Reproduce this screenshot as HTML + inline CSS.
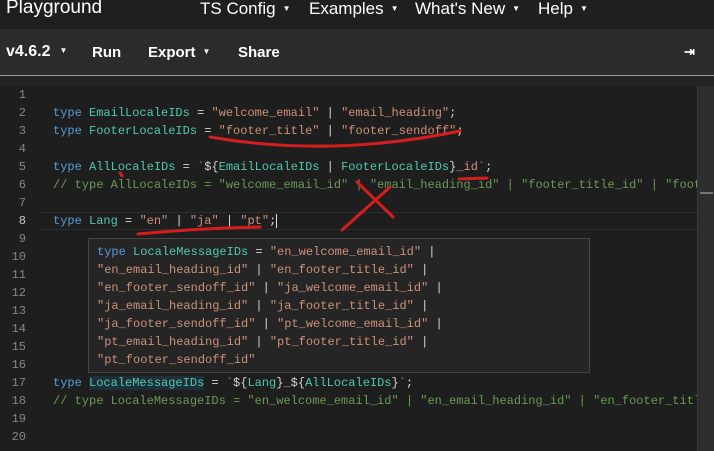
<!DOCTYPE html>
<html><head><meta charset="utf-8"><style>
*{margin:0;padding:0;box-sizing:border-box}
body{width:714px;height:451px;overflow:hidden;background:#1e1e1e;font-family:"Liberation Sans",sans-serif;position:relative}
.top{position:absolute;left:0;top:0;width:714px;height:29px;background:#1f1f1f;color:#fff}
.top>span{position:absolute;top:-1px;font-size:17px;white-space:nowrap}
.bar{position:absolute;left:0;top:29px;width:714px;height:46px;background:#2b2b2b;color:#fff;font-weight:bold}
.bar>span{position:absolute;top:15px;font-size:15px;white-space:nowrap}
.sep{position:absolute;left:0;top:75px;width:714px;height:1px;background:#9a9a9a}
.strip{position:absolute;left:0;top:76px;width:714px;height:10px;background:#232323}
.car{font-size:8px;vertical-align:3px;margin-left:7px;font-weight:normal}
.code{position:absolute;left:0;top:86px;width:697px;height:365px;overflow:hidden;font-family:"Liberation Mono",monospace;font-size:12px;line-height:18px;white-space:pre;color:#d4d4d4}
.ln{position:absolute;left:0;width:26px;text-align:right;color:#858585;font-size:12px}
.l{position:absolute;left:53px}
.k{color:#569cd6}.t{color:#4ec9b0}.s{color:#ce9178}.c{color:#6a9955}
.cur{position:absolute;left:40px;top:212px;width:657px;height:18px;border-top:1px solid #2c2c2c;border-bottom:1px solid #2c2c2c}
.tip{position:absolute;left:88px;top:238px;width:502px;height:135px;background:#252526;border:1px solid #454545;font-family:"Liberation Mono",monospace;font-size:12px;line-height:18px;white-space:pre;color:#d4d4d4;padding:4px 0 0 8px}
.sb{position:absolute;left:697px;top:86px;width:17px;height:365px;background:#2e2e2e;border-left:1px solid #3a3a3a}
</style></head><body>
<div class="top"><span style="left:6px;font-size:19px;top:-3px">Playground</span><span style="left:200px">TS Config<span class="car">▼</span></span><span style="left:309px">Examples<span class="car">▼</span></span><span style="left:415px">What's New<span class="car">▼</span></span><span style="left:538px">Help<span class="car">▼</span></span></div>
<div class="bar"><span style="left:6px;font-size:16px;top:14px">v4.6.2<span class="car" style="margin-left:9px">▼</span></span><span style="left:92px">Run</span><span style="left:148px">Export<span class="car">▼</span></span><span style="left:238px">Share</span><span style="left:684px;font-size:13px">⇥</span></div>
<div class="sep"></div><div class="strip"></div>
<div class="cur"></div>
<div class="sb"><div style="position:absolute;left:2px;top:106px;width:13px;height:2px;background:#777"></div></div>
<div class="code">
<div class="ln" style="top:0">1</div>
<div class="ln" style="top:18px">2</div><div class="l" style="top:18px"><span class="k">type</span> <span class="t">EmailLocaleIDs</span> = <span class="s">"welcome_email"</span> | <span class="s">"email_heading"</span>;</div>
<div class="ln" style="top:36px">3</div><div class="l" style="top:36px"><span class="k">type</span> <span class="t">FooterLocaleIDs</span> = <span class="s">"footer_title"</span> | <span class="s">"footer_sendoff"</span>;</div>
<div class="ln" style="top:54px">4</div>
<div class="ln" style="top:72px">5</div><div class="l" style="top:72px"><span class="k">type</span> <span class="t">AllLocaleIDs</span> = <span class="s">`</span>${<span class="t">EmailLocaleIDs</span> | <span class="t">FooterLocaleIDs</span>}<span class="s">_id`</span>;</div>
<div class="ln" style="top:90px">6</div><div class="l c" style="top:90px">// type AllLocaleIDs = "welcome_email_id" | "email_heading_id" | "footer_title_id" | "footer_sendoff_id"</div>
<div class="ln" style="top:108px">7</div>
<div class="ln" style="top:126px;color:#c6c6c6">8</div><div class="l" style="top:126px"><span class="k">type</span> <span class="t">Lang</span> = <span class="s">"en"</span> | <span class="s">"ja"</span> | <span class="s">"pt"</span>;<span style="border-left:1px solid #ddd"></span></div>
<div class="ln" style="top:144px">9</div>
<div class="ln" style="top:162px">10</div>
<div class="ln" style="top:180px">11</div>
<div class="ln" style="top:198px">12</div>
<div class="ln" style="top:216px">13</div>
<div class="ln" style="top:234px">14</div>
<div class="ln" style="top:252px">15</div>
<div class="ln" style="top:270px">16</div>
<div class="ln" style="top:288px">17</div><div class="l" style="top:288px"><span class="k">type</span> <span class="t" style="background:#1f2f3a">LocaleMessageIDs</span> = <span class="s">`</span>${<span class="t">Lang</span>}<span class="s">_</span>${<span class="t">AllLocaleIDs</span>}<span class="s">`</span>;</div>
<div class="ln" style="top:306px">18</div><div class="l c" style="top:306px">// type LocaleMessageIDs = "en_welcome_email_id" | "en_email_heading_id" | "en_footer_title_id"</div>
<div class="ln" style="top:324px">19</div>
<div class="ln" style="top:342px">20</div>
</div>
<div class="tip"><span class="k">type</span> <span class="t">LocaleMessageIDs</span> = <span class="s">"en_welcome_email_id"</span> |
<span class="s">"en_email_heading_id"</span> | <span class="s">"en_footer_title_id"</span> |
<span class="s">"en_footer_sendoff_id"</span> | <span class="s">"ja_welcome_email_id"</span> |
<span class="s">"ja_email_heading_id"</span> | <span class="s">"ja_footer_title_id"</span> |
<span class="s">"ja_footer_sendoff_id"</span> | <span class="s">"pt_welcome_email_id"</span> |
<span class="s">"pt_email_heading_id"</span> | <span class="s">"pt_footer_title_id"</span> |
<span class="s">"pt_footer_sendoff_id"</span></div>
<svg style="position:absolute;left:0;top:0" width="714" height="451" fill="none" stroke="#d41e1e" stroke-width="3" stroke-linecap="round">
<path d="M210 137 Q330 158 460 131"/>
<path d="M120 173 l2 3"/>
<path d="M459 179 L487 178"/>
<path d="M357 182 L393 217"/>
<path d="M390 187 L342 230"/>
<path d="M138 234 Q200 228 260 227"/>
</svg>
</body></html>
